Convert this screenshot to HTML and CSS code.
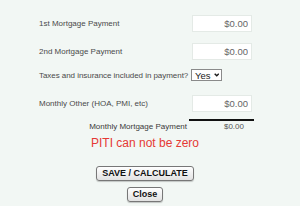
FILE: index.html
```html
<!DOCTYPE html>
<html>
<head>
<meta charset="utf-8">
<link rel="stylesheet" href="styles.css">
</head>
<body>
<div class="form">
  <div class="row r1">
    <span class="label">1st Mortgage Payment</span>
    <input class="money" type="text" value="$0.00" readonly>
  </div>
  <div class="row r2">
    <span class="label">2nd Mortgage Payment</span>
    <input class="money" type="text" value="$0.00" readonly>
  </div>
  <div class="row r3">
    <span class="label label-sel">Taxes and insurance included in payment?</span>
    <div class="select"><span>Yes</span><svg class="chev" width="8" height="6" viewBox="0 0 8 6"><path d="M1 1.2 L4 4.2 L7 1.2" fill="none" stroke="#1a1a1a" stroke-width="2"/></svg></div>
  </div>
  <div class="row r4">
    <span class="label">Monthly Other (HOA, PMI, etc)</span>
    <input class="money" type="text" value="$0.00" readonly>
  </div>
  <div class="total">
    <span class="total-label">Monthly Mortgage Payment</span>
    <span class="total-value">$0.00</span>
  </div>
  <div class="error">PITI can not be zero</div>
  <div class="actions">
    <button class="btn" type="button">SAVE / CALCULATE</button>
    <button class="btn btn-close" type="button">Close</button>
  </div>
</div>
</body>
</html>
```

FILE: styles.css
```css
html, body {
  margin: 0;
  padding: 0;
}
body {
  background: #f2f7f4;
  font-family: "Liberation Sans", Arial, sans-serif;
  width: 300px;
  height: 206px;
  overflow: hidden;
}
.form {
  padding-top: 15px;
}
.row {
  display: flex;
  align-items: center;
  padding-left: 39px;
}
.label {
  width: 153px;
  font-size: 8px;
  color: #4a4a4a;
  white-space: nowrap;
}
.label-sel {
  width: 152px;
  letter-spacing: -0.05px;
}
.money {
  width: 60px;
  height: 17px;
  box-sizing: border-box;
  margin: 0;
  padding: 0 3px;
  border: 1px solid #e4eae6;
  background: #fff;
  text-align: right;
  font-family: "Liberation Sans", Arial, sans-serif;
  font-size: 9.5px;
  color: #666;
  outline: none;
}
.r2 { margin-top: 11px; }
.r3 { margin-top: 9px; }
.r4 { margin-top: 14px; }
.select {
  display: flex;
  align-items: center;
  gap: 3px;
  box-sizing: border-box;
  width: 31px;
  height: 12px;
  padding: 0 2px 0 3px;
  border: 1px solid #8a8a8a;
  background: #fff;
  font-size: 9.5px;
  color: #222;
}
.chev {
  display: block;
}
.total {
  display: flex;
  margin-top: 7px;
}
.total-label {
  width: 187px;
  padding-right: 2px;
  padding-top: 3px;
  text-align: right;
  font-size: 8px;
  line-height: 10px;
  color: #3a3a3a;
}
.total-value {
  width: 55px;
  padding-right: 10px;
  padding-top: 1px;
  border-top: 2px solid #111;
  text-align: right;
  font-size: 8px;
  line-height: 10px;
  color: #555;
}
.error {
  width: 290px;
  margin-top: 4px;
  text-align: center;
  font-size: 12px;
  line-height: 14px;
  color: #e53935;
}
.actions {
  width: 290px;
  display: flex;
  flex-direction: column;
  align-items: center;
  gap: 6px;
  margin-top: 16px;
}
.btn {
  margin: 0;
  padding: 0 5px;
  height: 15px;
  border: 1px solid #777;
  border-radius: 3px;
  background: linear-gradient(#ffffff, #e2e2e2);
  box-shadow: 0 1px 1px rgba(0, 0, 0, 0.2);
  font-family: "Liberation Sans", Arial, sans-serif;
  font-weight: bold;
  font-size: 9px;
  line-height: 13px;
  color: #111;
}
```
